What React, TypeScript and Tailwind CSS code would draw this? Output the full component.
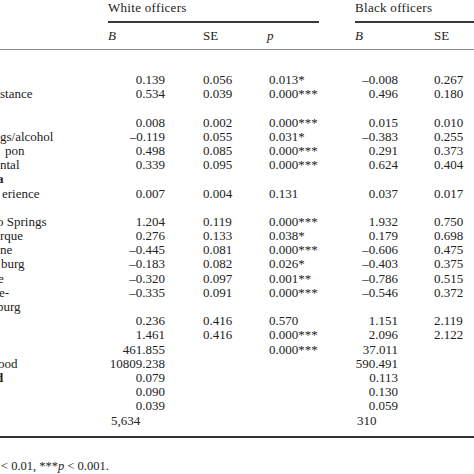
import React from "react";

type Row = {
  label?: React.ReactNode;
  wb?: string;
  wse?: string;
  wp?: string;
  bb?: string;
  bse?: string;
  wbLeft?: boolean;
  bbLeft?: boolean;
};

const rows: Row[] = [
  { wb: "0.139", wse: "0.056", wp: "0.013*", bb: "–0.008", bse: "0.267" },
  { label: <span>stance</span>, wb: "0.534", wse: "0.039", wp: "0.000***", bb: "0.496", bse: "0.180" },
  {},
  { wb: "0.008", wse: "0.002", wp: "0.000***", bb: "0.015", bse: "0.010" },
  { label: <span>gs/alcohol</span>, wb: "–0.119", wse: "0.055", wp: "0.031*", bb: "–0.383", bse: "0.255" },
  { label: <span className="pl-[5px]">pon</span>, wb: "0.498", wse: "0.085", wp: "0.000***", bb: "0.291", bse: "0.373" },
  { label: <span>ntal</span>, wb: "0.339", wse: "0.095", wp: "0.000***", bb: "0.624", bse: "0.404" },
  { label: <span className="ml-[-3px] font-bold">a</span> },
  { label: <span className="pl-[2px]">erience</span>, wb: "0.007", wse: "0.004", wp: "0.131", bb: "0.037", bse: "0.017" },
  {},
  { label: <span className="ml-[-3px]">o Springs</span>, wb: "1.204", wse: "0.119", wp: "0.000***", bb: "1.932", bse: "0.750" },
  { label: <span>rque</span>, wb: "0.276", wse: "0.133", wp: "0.038*", bb: "0.179", bse: "0.698" },
  { label: <span>ne</span>, wb: "–0.445", wse: "0.081", wp: "0.000***", bb: "–0.606", bse: "0.475" },
  { label: <span className="pl-[1px]">burg</span>, wb: "–0.183", wse: "0.082", wp: "0.026*", bb: "–0.403", bse: "0.375" },
  { label: <span className="ml-[-2px]">e</span>, wb: "–0.320", wse: "0.097", wp: "0.001**", bb: "–0.786", bse: "0.515" },
  { label: <span className="ml-[-1px]">e-</span>, wb: "–0.335", wse: "0.091", wp: "0.000***", bb: "–0.546", bse: "0.372" },
  { label: <span className="ml-[-3px]">burg</span> },
  { wb: "0.236", wse: "0.416", wp: "0.570", bb: "1.151", bse: "2.119" },
  { wb: "1.461", wse: "0.416", wp: "0.000***", bb: "2.096", bse: "2.122" },
  { wb: "461.855", wp: "0.000***", bb: "37.011" },
  { label: <span className="ml-[-2px]">ood</span>, wb: "10809.238", bb: "590.491" },
  { label: <span className="ml-[-4px] font-bold">d</span>, wb: "0.079", bb: "0.113" },
  { wb: "0.090", bb: "0.130" },
  { wb: "0.039", bb: "0.059" },
  { wb: "5,634", bb: "310", wbLeft: true, bbLeft: true },
];

export default function App() {
  return (
    <div
      className="w-[474px] h-[474px] overflow-hidden bg-white text-[#222] text-[13px]"
      style={{ fontFamily: '"Liberation Serif", "Times New Roman", serif' }}
    >
      {/* header row 1 */}
      <div className="grid grid-cols-[108px_247px_1fr] leading-[14px] pt-[1px]">
        <div />
        <div className="pr-[36px]">
          <div className="border-b-2 border-[#3a3a3a] pb-[6px] tracking-[0.3px]">White officers</div>
        </div>
        <div>
          <div className="border-b-2 border-[#3a3a3a] pb-[6px] tracking-[0.3px]">Black officers</div>
        </div>
      </div>
      {/* header row 2 */}
      <div className="grid grid-cols-[108px_95px_64px_88px_79px_1fr] leading-[14px] pt-[6px] pb-[6px] border-b border-[#8a8a8a]">
        <div />
        <div className="italic">B</div>
        <div>SE</div>
        <div className="italic">p</div>
        <div className="italic">B</div>
        <div>SE</div>
      </div>
      {/* body */}
      <div className="pt-[23px] pb-[8px] border-b-2 border-[#333]">
        {rows.map((r, i) => (
          <div
            key={i}
            className="grid grid-cols-[108px_95px_64px_88px_79px_1fr] h-[14.2px] leading-[14.2px] whitespace-nowrap"
          >
            <div className="overflow-hidden flex">{r.label}</div>
            <div className={r.wbLeft ? "pl-[3px]" : "text-right pr-[38px]"}>{r.wb}</div>
            <div>{r.wse}</div>
            <div className="pl-[2px]">{r.wp}</div>
            <div className={r.bbLeft ? "pl-[2px]" : "text-right pr-[36px]"}>{r.bb}</div>
            <div>{r.bse}</div>
          </div>
        ))}
      </div>
      {/* footnote */}
      <div className="pt-[21px] leading-[14px] text-[12.5px] whitespace-nowrap pl-[1px]">
        &lt; 0.01, ***<span className="italic">p</span> &lt; 0.001.
      </div>
    </div>
  );
}
